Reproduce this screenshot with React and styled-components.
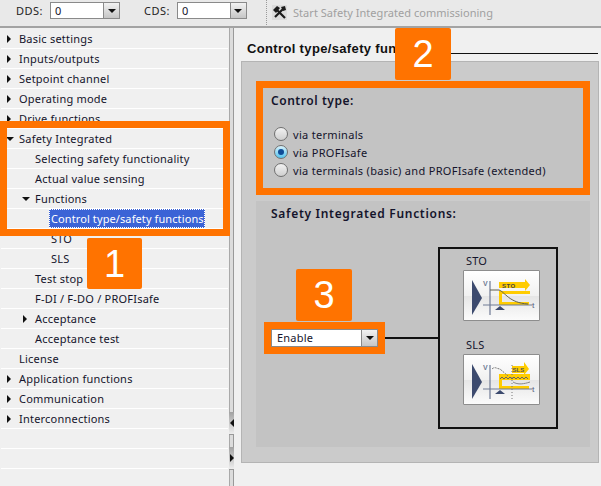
import React from 'react'
import styled, { createGlobalStyle } from 'styled-components'

const Global = createGlobalStyle`
html, body { margin: 0; padding: 0; background: #f0f0f0; }
body { font-family: "Noto Sans", "Open Sans", sans-serif; font-size: 11px; color: #14142b; }
`

const Page = styled.div`
position: relative;
width: 601px;
height: 486px;
overflow: hidden;
`
const Toolbar = styled.div`
display: flex;
align-items: center;
height: 25px;
padding-bottom: 1px;
background: #e9e9e9;
border-bottom: 2px solid #a3a3a3;
`
const Field = styled.div`
display: flex;
align-items: center;
align-self: flex-start;
gap: 7px;
box-sizing: border-box;
width: 127px;
padding-top: 2px;
padding-left: ${p => p.$pad}px;
`
const FieldLabel = styled.span`
font-size: 11px;
letter-spacing: 0.5px;
color: #222;
`
const Combo = styled.div`
display: flex;
flex: none;
box-sizing: border-box;
width: ${p => p.$width}px;
height: ${p => p.$height}px;
background: #fff;
border: 1px solid #8a8a8a;
`
const ComboValue = styled.span`
flex: 1;
padding-left: ${p => p.$pad}px;
line-height: ${p => p.$line}px;
font-size: 11px;
letter-spacing: 0.2px;
color: #14142b;
`
const ComboButton = styled.span`
display: flex;
align-items: center;
justify-content: center;
width: 15px;
background: linear-gradient(#f2f2f2, #c6c6c6);
border-left: 1px solid #8a8a8a;
&::after {
  content: '';
  border-left: 4px solid transparent;
  border-right: 4px solid transparent;
  border-top: 4px solid #111;
}
`
const ToolSep = styled.span`
align-self: stretch;
width: 0;
margin-left: 12px;
border-left: 1px dotted #9a9a9a;
`
const ToolIcon = styled.span`
display: flex;
align-items: center;
justify-content: center;
width: 15px;
height: 15px;
margin-left: 5px;
background: #dcdcdc;
`
const ToolText = styled.span`
margin-left: 6px;
font-size: 11px;
letter-spacing: 0.04px;
color: #a0a0a0;
`
const Body = styled.div`
display: flex;
height: 458px;
`
const Tree = styled.div`
width: 229px;
padding-top: 1px;
`
const Row = styled.div`
position: relative;
display: flex;
align-items: center;
box-sizing: border-box;
height: 20px;
margin-left: 1px;
margin-right: 1px;
padding-left: ${p => 18 + p.$level * 16}px;
border-bottom: 1px solid #fff;
letter-spacing: 0.22px;
`
const Twist = styled.span`
position: absolute;
left: ${p => 6 + p.$level * 16}px;
top: 6px;
width: 0;
height: 0;
${p => p.$open
    ? `margin-top: 2px; margin-left: -1px; border-left: 4px solid transparent; border-right: 4px solid transparent; border-top: 4px solid #111;`
    : `margin-top: 0; border-top: 4px solid transparent; border-bottom: 4px solid transparent; border-left: 4px solid #111;`}
`
const Selected = styled.span`
margin-left: -2px;
padding: 0 1px 0 2px;
line-height: 19px;
letter-spacing: 0.1px;
color: #fff;
background: #3b63d6;
outline: 1px dotted #fff;
outline-offset: -1px;
`
const Splitter = styled.div`
display: flex;
flex-direction: column;
box-sizing: border-box;
width: 5px;
background: linear-gradient(90deg, #a9a9a9 0 1px, #dcdcdc 1px 4px, #999 4px 5px);
padding-top: 384px;
`
const Grip = styled.span`
display: flex;
align-items: center;
justify-content: center;
box-sizing: border-box;
height: 23px;
margin-bottom: 12px;
background: linear-gradient(#a2a2a2, #eeeeee);
border-bottom: 1px solid #999;
&::after {
  content: '';
  border-top: 4px solid transparent;
  border-bottom: 4px solid transparent;
  ${p => p.$right ? 'border-left: 4px solid #111;' : 'border-right: 4px solid #111;'}
}
`
const Content = styled.div`
flex: 1;
padding: 0 2px 0 7px;
`
const TitleRow = styled.div`
display: flex;
box-sizing: border-box;
height: 25px;
margin-left: 6px;
margin-right: 1px;
padding-top: 14px;
`
const TitleText = styled.span`
font: bold 13px/14px "Liberation Sans", Arial, sans-serif;
letter-spacing: 0.35px;
color: #111;
white-space: nowrap;
`
const TitleRule = styled.span`
flex: 1;
height: 12px;
border-bottom: 1px solid #111;
box-sizing: border-box;
`
const Panel = styled.div`
box-sizing: border-box;
height: 402px;
margin-top: 8px;
padding: 19px 8px 15px 14px;
background: #cbcbcb;
border: 1px solid #b4b4b4;
`
const ControlBox = styled.div`
box-sizing: border-box;
height: 114px;
padding: 4px 8px;
background: #c3c3c3;
border: 7px solid #ff7300;
`
const Heading = styled.div`
font-size: 12px;
font-weight: 600;
line-height: 17px;
letter-spacing: ${p => p.$spacing}px;
color: #14142b;
`
const Radios = styled.div`
display: flex;
flex-direction: column;
margin-top: 16px;
`
const RadioRow = styled.div`
display: flex;
align-items: center;
gap: 5px;
height: 18px;
margin-left: 3px;
letter-spacing: 0.31px;
`
const Radio = styled.span`
display: flex;
align-items: center;
justify-content: center;
box-sizing: border-box;
width: 14px;
height: 14px;
border-radius: 50%;
border: 1px solid #707070;
background: ${p => p.$on
    ? 'linear-gradient(#d8f2fb, #56c3ee)'
    : 'linear-gradient(#f2f2f2, #cfcfcf)'};
&::after {
  content: ${p => p.$on ? "''" : 'none'};
  width: 6px;
  height: 6px;
  border-radius: 50%;
  background: #0f4c97;
}
`
const FunctionsBox = styled.div`
box-sizing: border-box;
height: 246px;
margin-top: 6px;
padding: 4px 8px;
background: #c3c3c3;
`
const FunctionsTitle = styled.div`
padding-left: 7px;
`
const Diagram = styled.div`
display: flex;
align-items: center;
margin-top: 25px;
`
const SelectFrame = styled.div`
box-sizing: border-box;
width: 121px;
height: 32px;
border: 7px solid #ff7300;
background: #ff7300;
`
const Wire = styled.div`
width: 53px;
height: 2px;
background: #111;
`
const Bracket = styled.div`
box-sizing: border-box;
width: 120px;
height: 182px;
padding: 3px 0 0 23px;
border: 2px solid #111;
`
const FuncLabel = styled.div`
height: 18px;
line-height: 18px;
padding-left: 3px;
letter-spacing: 0.22px;
`
const FuncCard = styled.div`
box-sizing: border-box;
width: 77px;
height: 51px;
margin-bottom: 15px;
background: linear-gradient(#fff 0%, #f1f1f1 50%, #e6e6e6 52%, #fbfbfb 100%);
border: 1px solid #8d8d8d;
border-radius: 1px;
`
const Frame = styled.div`
position: absolute;
left: 0;
top: 121px;
box-sizing: border-box;
width: 230px;
height: 115px;
border: 7px solid #ff7300;
`
const Badge = styled.div`
position: absolute;
left: ${p => p.$x}px;
top: ${p => p.$y}px;
width: ${p => p.$w}px;
height: ${p => p.$h}px;
display: flex;
align-items: center;
justify-content: center;
background: #ff7300;
border-radius: 2px;
color: #fff;
font: 38px/1 "Liberation Sans", Arial, sans-serif;
`

const tree = [
  ['Basic settings', 0, 'closed'],
  ['Inputs/outputs', 0, 'closed'],
  ['Setpoint channel', 0, 'closed'],
  ['Operating mode', 0, 'closed'],
  ['Drive functions', 0, 'closed'],
  ['Safety Integrated', 0, 'open'],
  ['Selecting safety functionality', 1],
  ['Actual value sensing', 1],
  ['Functions', 1, 'open'],
  ['Control type/safety functions', 2, null, true],
  ['STO', 2],
  ['SLS', 2],
  ['Test stop', 1],
  ['F-DI / F-DO / PROFIsafe', 1],
  ['Acceptance', 1, 'closed'],
  ['Acceptance test', 1],
  ['License', 0],
  ['Application functions', 0, 'closed'],
  ['Communication', 0, 'closed'],
  ['Interconnections', 0, 'closed'],
  ['', 0],
  ['', 0],
]

const CommissionIcon = () => (
  <svg width="15" height="15" viewBox="0 0 15 15">
    <path d="M4 4 L13 13 M11 4 L3 12" stroke="#1c1c1c" strokeWidth="2.2" fill="none" />
    <path d="M1 5 L5 1 L8 3 L4 8 Z" fill="#1c1c1c" />
    <path d="M9 2 L13 1 L14 5 L11 6 Z" fill="#1c1c1c" />
  </svg>
)

const Axes = () => (
  <>
    <path d="M8 9 L18 27 L8 44 Z" fill="#3c4a6e" />
    <path d="M26 10 V44 M19 34 H68" stroke="#6f7a94" strokeWidth="1.2" fill="none" />
    <path d="M31 39 L36 35 L41 39 Z" fill="#3c4a6e" />
    <text x="19" y="15" fontSize="7" fontWeight="700" fill="#6f7a94" fontFamily="Liberation Sans">V</text>
    <text x="68" y="37" fontSize="7" fontWeight="700" fill="#6f7a94" fontFamily="Liberation Sans">t</text>
  </>
)

const StoIcon = () => (
  <svg width="75" height="49" viewBox="0 0 75 49">
    <path d="M35 11 H61 V8 L66 14 L61 20 V17 H35 Z" fill="#fc0" />
    <path d="M35 20 H66 V23 H38 V31 H65 V34 H35 Z" fill="#fc0" />
    <Axes />
    <path d="M26 19 H35 C41 21 45 32 64 33" stroke="#5f5f4c" strokeWidth="1" fill="none" />
    <text x="38" y="16.5" fontSize="6" fontWeight="700" letterSpacing="0.5" fill="#444" fontFamily="Liberation Sans">STO</text>
  </svg>
)

const SlsIcon = () => (
  <svg width="75" height="49" viewBox="0 0 75 49">
    <path d="M48 11 H60 V7 L65 14 L60 20 V18 H48 Z" fill="#fc0" />
    <path d="M35 19 H66 V25 H38 V31 H65 V34 H35 Z" fill="#fc0" />
    <Axes />
    <path d="M36 24 l2 -2 l2 2 l2 -2 l2 2 l2 -2 l2 2 l2 -2 l2 2 l2 -2 l2 2 l2 -2 l2 2 l2 -2 l2 2" stroke="#666" strokeWidth="1" fill="none" />
    <path d="M28 14 C31 11 33 14 36 14 L44 21" stroke="#777" strokeWidth="1" strokeDasharray="2 1" fill="none" />
    <path d="M49 27 C54 30 60 29 66 27" stroke="#888" strokeWidth="1" fill="none" />
    <path d="M48 10 V46" stroke="#777" strokeWidth="1" strokeDasharray="1 2" fill="none" />
    <text x="48.5" y="16.5" fontSize="6" fontWeight="700" fill="#555" fontFamily="Liberation Sans">SLS</text>
  </svg>
)

const App = () => {
  return (
    <Page>
      <Global />
      <Toolbar>
        <Field $pad={16}>
          <FieldLabel>DDS:</FieldLabel>
          <Combo $width={70} $height={17}><ComboValue $pad={4} $line={15}>0</ComboValue><ComboButton /></Combo>
        </Field>
        <Field $pad={17}>
          <FieldLabel>CDS:</FieldLabel>
          <Combo $width={70} $height={17}><ComboValue $pad={4} $line={15}>0</ComboValue><ComboButton /></Combo>
        </Field>
        <ToolSep />
        <ToolIcon><CommissionIcon /></ToolIcon>
        <ToolText>Start Safety Integrated commissioning</ToolText>
      </Toolbar>
      <Body>
        <Tree>
          {tree.map(([label, level, twist, selected], i) => (
            <Row key={i} $level={level}>
              {twist && <Twist $level={level} $open={twist === 'open'} />}
              {selected ? <Selected>{label}</Selected> : label}
            </Row>
          ))}
        </Tree>
        <Splitter>
          <Grip />
          <Grip $right />
        </Splitter>
        <Content>
          <TitleRow>
            <TitleText>Control type/safety functions</TitleText>
            <TitleRule />
          </TitleRow>
          <Panel>
            <ControlBox>
              <Heading $spacing={0.55}>Control type:</Heading>
              <Radios>
                <RadioRow><Radio />via terminals</RadioRow>
                <RadioRow><Radio $on />via PROFIsafe</RadioRow>
                <RadioRow><Radio />via terminals (basic) and PROFIsafe (extended)</RadioRow>
              </Radios>
            </ControlBox>
            <FunctionsBox>
              <FunctionsTitle>
                <Heading $spacing={0.7}>Safety Integrated Functions:</Heading>
              </FunctionsTitle>
              <Diagram>
                <SelectFrame>
                  <Combo $width={107} $height={18}><ComboValue $pad={5} $line={16}>Enable</ComboValue><ComboButton /></Combo>
                </SelectFrame>
                <Wire />
                <Bracket>
                  <FuncLabel>STO</FuncLabel>
                  <FuncCard><StoIcon /></FuncCard>
                  <FuncLabel>SLS</FuncLabel>
                  <FuncCard><SlsIcon /></FuncCard>
                </Bracket>
              </Diagram>
            </FunctionsBox>
          </Panel>
        </Content>
      </Body>
      <Frame />
      <Badge $x={87} $y={238} $w={55} $h={51}>1</Badge>
      <Badge $x={395} $y={28} $w={56} $h={52}>2</Badge>
      <Badge $x={296} $y={269} $w={56} $h={52}>3</Badge>
    </Page>
  )
}

export default App
